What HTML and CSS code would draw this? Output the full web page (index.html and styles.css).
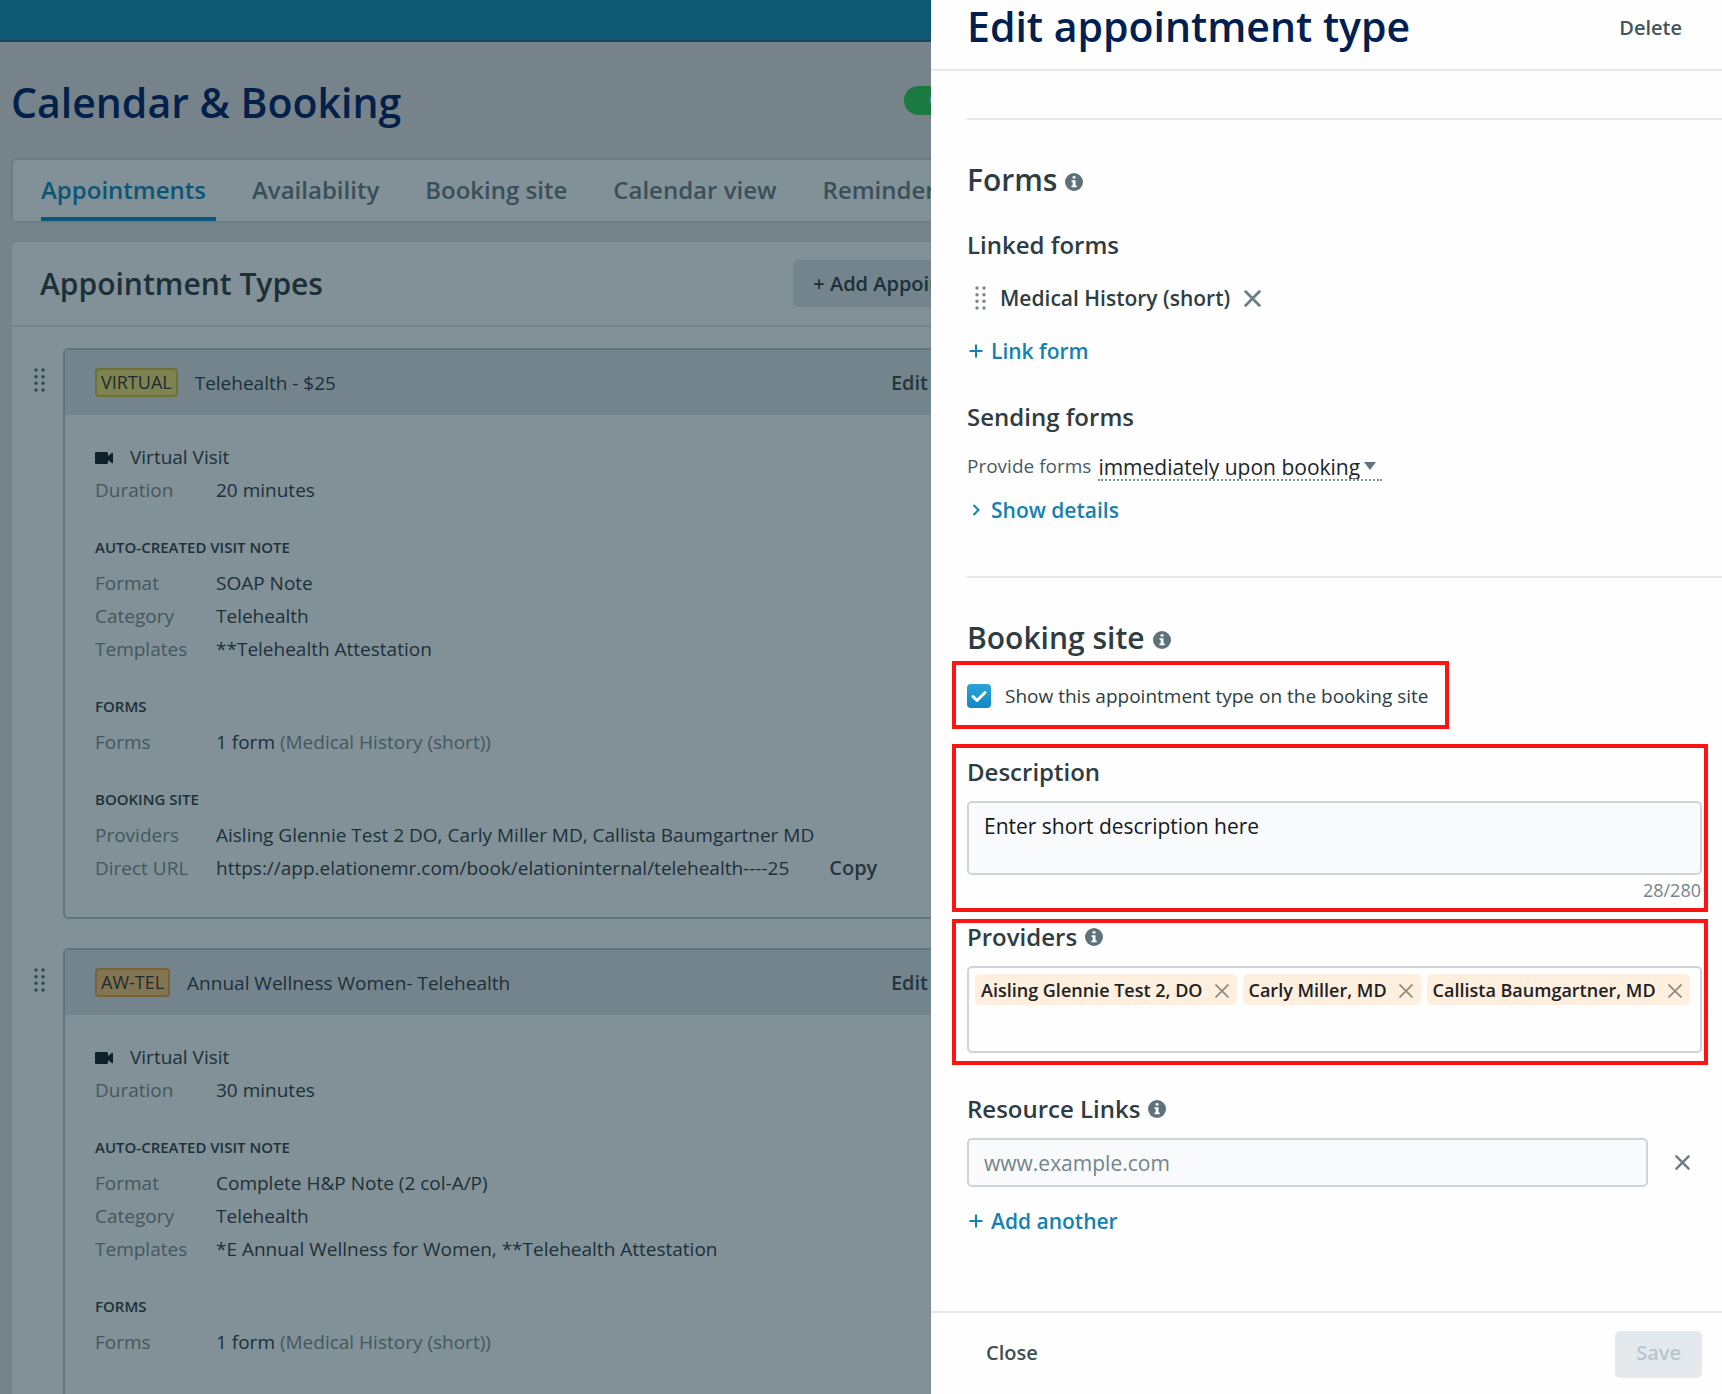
FILE: index.html
```html
<!DOCTYPE html>
<html lang="en">
<head>
<meta charset="utf-8">
<title>Calendar &amp; Booking</title>
<link rel="stylesheet" href="styles.css">
</head>
<body>
<svg class="sprite" aria-hidden="true">
  <symbol id="grip" viewBox="0 0 11 24">
    <g fill="currentColor">
      <circle cx="2" cy="2" r="1.7"/><circle cx="9" cy="2" r="1.7"/>
      <circle cx="2" cy="8.7" r="1.7"/><circle cx="9" cy="8.7" r="1.7"/>
      <circle cx="2" cy="15.3" r="1.7"/><circle cx="9" cy="15.3" r="1.7"/>
      <circle cx="2" cy="22" r="1.7"/><circle cx="9" cy="22" r="1.7"/>
    </g>
  </symbol>
  <symbol id="info" viewBox="0 0 18 18">
    <circle cx="9" cy="9" r="9" fill="currentColor"/>
    <path fill="#fff" d="M7.6 3.2h2.9v2.4H7.6zM6.6 7.2h3.9v5.3h1.2v1.7H6.5v-1.7h1.2V8.9H6.6z"/>
  </symbol>
  <symbol id="video" viewBox="0 0 18 12">
    <path fill="currentColor" d="M1.2 0h10.6A1.2 1.2 0 0 1 13 1.200V4l4-3.200q1-.5 1 .6v9.200q0 1.100-1 .6L13 8v2.800A1.200 1.200 0 0 1 11.800 12H1.200A1.200 1.200 0 0 1 0 10.800V1.200A1.200 1.200 0 0 1 1.200 0z"/>
  </symbol>
  <symbol id="cross" viewBox="0 0 16 16">
    <path d="M1.500 1.500l13 13M14.500 1.500l-13 13" fill="none" stroke="currentColor" stroke-width="2.600" stroke-linecap="round"/>
  </symbol>
  <symbol id="thin-cross" viewBox="0 0 14 14">
    <path d="M.5 .5l13 13M13.500 .5l-13 13" fill="none" stroke="currentColor" stroke-width="1.700"/>
  </symbol>
  <symbol id="plus" viewBox="0 0 14 14">
    <path d="M7 .5v13M.5 7h13" fill="none" stroke="currentColor" stroke-width="2"/>
  </symbol>
</svg>

<div class="app">
  <div class="page">
    <div class="topbar"></div>
    <main class="content">
      <div class="title-row">
        <h1 class="page-title">Calendar &amp; Booking</h1>
        <span class="status">On</span>
      </div>

      <nav class="tabs">
        <a class="tab tab-active" href="#appointments">Appointments</a>
        <a class="tab" href="#availability">Availability</a>
        <a class="tab" href="#booking">Booking site</a>
        <a class="tab" href="#calendar">Calendar view</a>
        <a class="tab" href="#reminders">Reminders</a>
      </nav>

      <section class="panel">
        <header class="panel-head">
          <h2 class="panel-title">Appointment Types</h2>
          <button class="add-button" type="button">+ Add Appointment</button>
        </header>

        <div class="types">
          <div class="type">
            <svg class="grip"><use href="#grip"/></svg>
            <article class="card">
              <header class="card-head">
                <span class="badge badge-yellow">VIRTUAL</span>
                <span class="card-title">Telehealth - $25</span>
                <button class="text-button edit" type="button">Edit</button>
              </header>
              <div class="card-body">
                <div class="visit"><svg class="video"><use href="#video"/></svg>Virtual Visit</div>
                <dl class="facts">
                  <dt>Duration</dt><dd>20 minutes</dd>
                </dl>
                <h3 class="group">AUTO-CREATED VISIT NOTE</h3>
                <dl class="facts">
                  <dt>Format</dt><dd>SOAP Note</dd>
                  <dt>Category</dt><dd>Telehealth</dd>
                  <dt>Templates</dt><dd>**Telehealth Attestation</dd>
                </dl>
                <h3 class="group">FORMS</h3>
                <dl class="facts">
                  <dt>Forms</dt><dd>1 form <span class="muted">(Medical History (short))</span></dd>
                </dl>
                <h3 class="group">BOOKING SITE</h3>
                <dl class="facts">
                  <dt>Providers</dt><dd>Aisling Glennie Test 2 DO, Carly Miller MD, Callista Baumgartner MD</dd>
                  <dt>Direct URL</dt><dd class="url">https://app.elationemr.com/book/elationinternal/telehealth----25 <button class="text-button" type="button">Copy</button></dd>
                </dl>
              </div>
            </article>
          </div>

          <div class="type">
            <svg class="grip"><use href="#grip"/></svg>
            <article class="card">
              <header class="card-head">
                <span class="badge badge-orange">AW-TEL</span>
                <span class="card-title">Annual Wellness Women- Telehealth</span>
                <button class="text-button edit" type="button">Edit</button>
              </header>
              <div class="card-body">
                <div class="visit"><svg class="video"><use href="#video"/></svg>Virtual Visit</div>
                <dl class="facts">
                  <dt>Duration</dt><dd>30 minutes</dd>
                </dl>
                <h3 class="group">AUTO-CREATED VISIT NOTE</h3>
                <dl class="facts">
                  <dt>Format</dt><dd>Complete H&amp;P Note (2 col-A/P)</dd>
                  <dt>Category</dt><dd>Telehealth</dd>
                  <dt>Templates</dt><dd>*E Annual Wellness for Women, **Telehealth Attestation</dd>
                </dl>
                <h3 class="group">FORMS</h3>
                <dl class="facts">
                  <dt>Forms</dt><dd>1 form <span class="muted">(Medical History (short))</span></dd>
                </dl>
              </div>
            </article>
          </div>
        </div>
      </section>
    </main>
  </div>

  <aside class="drawer">
    <header class="drawer-head">
      <h1 class="drawer-title">Edit appointment type</h1>
      <button class="delete" type="button">Delete</button>
    </header>

    <div class="drawer-body">
      <section class="section">
        <h2 class="section-title">Forms <svg class="info"><use href="#info"/></svg></h2>

        <h3 class="field-title linked-title">Linked forms</h3>
        <div class="linked">
          <svg class="linked-grip"><use href="#grip"/></svg>
          <span>Medical History (short)</span>
          <button class="icon-button" type="button" aria-label="Remove form"><svg class="cross-lg"><use href="#cross"/></svg></button>
        </div>
        <button class="link-button" type="button"><svg class="link-icon"><use href="#plus"/></svg>Link form</button>

        <h3 class="field-title sending-title">Sending forms</h3>
        <div class="sending">
          <label for="when">Provide forms</label>
          <span class="select-wrap">
            <select id="when"><option>immediately upon booking</option></select>
            <svg class="caret" viewBox="0 0 12 8"><path fill="#5f747d" d="M0 0h12L6 8z"/></svg>
          </span>
        </div>
        <button class="link-button details" type="button"><svg class="link-icon" viewBox="0 0 14 14"><path d="M4.500 2l5 5-5 5" fill="none" stroke="currentColor" stroke-width="2"/></svg>Show details</button>
      </section>

      <section class="section booking">
        <h2 class="section-title">Booking site <svg class="info"><use href="#info"/></svg></h2>

        <div class="marked marked-check">
          <input class="check" type="checkbox" id="show" checked>
          <label for="show">Show this appointment type on the booking site</label>
        </div>

        <div class="marked marked-description">
          <label class="field-title" for="description">Description</label>
          <textarea class="box description" id="description">Enter short description here</textarea>
          <div class="count">28/280</div>
        </div>

        <div class="marked marked-providers">
          <h3 class="field-title">Providers <svg class="info"><use href="#info"/></svg></h3>
          <div class="box chips">
            <span class="chip">Aisling Glennie Test 2, DO <button class="icon-button" type="button" aria-label="Remove Aisling Glennie"><svg class="chip-x"><use href="#thin-cross"/></svg></button></span>
            <span class="chip">Carly Miller, MD <button class="icon-button" type="button" aria-label="Remove Carly Miller"><svg class="chip-x"><use href="#thin-cross"/></svg></button></span>
            <span class="chip">Callista Baumgartner, MD <button class="icon-button" type="button" aria-label="Remove Callista Baumgartner"><svg class="chip-x"><use href="#thin-cross"/></svg></button></span>
          </div>
        </div>

        <label class="field-title resource-title" for="resource">Resource Links <svg class="info"><use href="#info"/></svg></label>
        <div class="resource">
          <input class="box resource-input" type="text" id="resource" placeholder="www.example.com">
          <button class="icon-button" type="button" aria-label="Remove link"><svg class="cross"><use href="#cross"/></svg></button>
        </div>
        <button class="link-button" type="button"><svg class="link-icon"><use href="#plus"/></svg>Add another</button>
      </section>
    </div>

    <footer class="drawer-foot">
      <button class="close" type="button">Close</button>
      <button class="save" type="button" disabled>Save</button>
    </footer>
  </aside>
</div>
</body>
</html>
```
FILE: styles.css
```css
* {
  box-sizing: border-box;
}

body {
  margin: 0;
  font-family: "Open Sans", "Noto Sans", sans-serif;
  font-size: 19px;
  background: #76838a;
}

h1, h2, h3, dl, dd {
  margin: 0;
}

h1, h2, h3 {
  font-weight: 600;
}

button, select, textarea, input {
  font: inherit;
  color: inherit;
}

button {
  padding: 0;
  border: 0;
  background: none;
  font-weight: 600;
  white-space: nowrap;
}

svg {
  display: block;
  flex: none;
}

.sprite {
  position: absolute;
  width: 0;
  height: 0;
}

.app {
  display: grid;
  grid-template-columns: 931fr 791fr;
  height: 100vh;
  overflow: hidden;
}

/* Page behind the drawer */

.page {
  min-width: 0;
  overflow: hidden;
  color: #1c303a;
}

.topbar {
  height: 42px;
  background: #0e5873;
  border-bottom: 2px solid #16475c;
}

/* The page runs on under the drawer */
.content {
  margin-right: -128px;
  padding: 32px 0 0 11px;
}

.title-row {
  display: flex;
  align-items: center;
  justify-content: space-between;
  padding-right: 99px;
}

.page-title {
  font-size: 41px;
  line-height: 56px;
  color: #02204a;
}

.status {
  width: 56px;
  margin-bottom: 4px;
  padding-left: 25px;
  border-radius: 15px;
  font-size: 19px;
  line-height: 29px;
  font-weight: 600;
  color: #8fa39f;
  background: #1b7942;
}

.tabs {
  display: flex;
  gap: 36px;
  height: 65px;
  margin-top: 28px;
  padding-left: 28px;
  border: 2px solid #6c7c84;
  border-radius: 6px;
  background: #829197;
}

.tab {
  padding-right: 10px;
  font-size: 24px;
  line-height: 60px;
  font-weight: 600;
  color: #3b4f59;
  text-decoration: none;
  white-space: nowrap;
}

.tab-active {
  color: #0b5676;
  box-shadow: inset 0 -4px #0b5676;
}

.panel {
  margin: 19px 0 0 1px;
  border-radius: 6px;
  background: #829197;
}

.panel-head {
  display: flex;
  align-items: center;
  justify-content: space-between;
  height: 85px;
  padding: 0 38px 0 28px;
  border-bottom: 2px solid #74848b;
}

.panel-title {
  font-size: 30px;
  line-height: 40px;
}

.add-button {
  height: 47px;
  padding: 0 20px;
  border-radius: 5px;
  font-size: 20px;
  background: #73848c;
}

.types {
  display: flex;
  flex-direction: column;
  gap: 29px;
  padding: 21px 28px 28px 22px;
}

.type {
  display: flex;
  gap: 18px;
}

.grip {
  width: 11px;
  height: 24px;
  margin-top: 20px;
  color: #34474f;
}

.card {
  flex: 1;
  border: 2px solid #60747d;
  border-radius: 6px;
}

.card-head {
  display: flex;
  align-items: center;
  height: 65px;
  padding: 0 101px 0 30px;
  background: #73848c;
}

.badge {
  margin-right: 17px;
  padding: 0 4px;
  border: 2px solid;
  border-radius: 4px;
  font-size: 18px;
  line-height: 25px;
  color: #1c2c2f;
}

.badge-yellow {
  background: #7f8352;
  border-color: #6c7236;
}

.badge-orange {
  background: #847552;
  border-color: #7a6238;
}

.text-button {
  font-size: 20px;
}

.edit {
  margin-left: auto;
  color: #24373f;
}

.card-body {
  padding: 26px 30px 32px;
}

.type:last-child .card-body {
  padding-bottom: 48px;
}

.visit {
  display: flex;
  align-items: center;
  gap: 17px;
  line-height: 33px;
}

.video {
  width: 18px;
  height: 12px;
  color: #0f222c;
}

.facts {
  display: grid;
  grid-template-columns: 121px 1fr;
  line-height: 33px;
}

.facts dt {
  color: #44575f;
}

.facts dd {
  white-space: nowrap;
}

.muted {
  color: #44575f;
}

.url .text-button {
  margin-left: 35px;
  line-height: 28px;
  color: #24373f;
}

.group {
  margin: 28px 0 8px;
  font-size: 15px;
  line-height: 24px;
}

/* Drawer */

.drawer {
  display: flex;
  flex-direction: column;
  min-width: 0;
  min-height: 0;
  color: #2e3d42;
  background: #fefefe;
}

.drawer-head {
  display: flex;
  align-items: center;
  justify-content: space-between;
  padding: 0 40px 17px 36px;
  border-bottom: 2px solid #e6eaeb;
}

.drawer-title {
  font-size: 41px;
  line-height: 52px;
  color: #02204f;
}

.delete {
  padding-top: 4px;
  font-size: 20px;
  line-height: 28px;
  color: #45555b;
}

.drawer-body {
  flex: 1;
  min-height: 0;
  overflow: hidden;
  padding: 47px 20px 0 36px;
}

.section {
  margin-right: -20px;
  padding: 40px 20px 52px 0;
  border-top: 2px solid #e6eaed;
}

.section-title {
  display: flex;
  align-items: center;
  gap: 8px;
  font-size: 30px;
  line-height: 40px;
}

.section-title .info {
  margin-top: 4px;
}

.info {
  width: 18px;
  height: 18px;
  color: #5f727b;
}

.field-title {
  display: flex;
  align-items: center;
  gap: 8px;
  font-size: 24px;
  line-height: 28px;
  font-weight: 600;
}

.linked-title {
  margin: 31px 0 25px;
}

.linked {
  display: flex;
  align-items: center;
  gap: 14px;
  margin-bottom: 25px;
  padding-left: 8px;
  font-size: 21px;
  line-height: 28px;
  font-weight: 600;
}

.linked-grip {
  width: 11px;
  height: 24px;
  color: #7b878c;
}

.icon-button {
  color: #6c7f88;
}

.cross-lg {
  width: 17px;
  height: 17px;
}

.cross {
  width: 15px;
  height: 15px;
}

.link-button {
  display: flex;
  align-items: center;
  gap: 8px;
  padding-left: 2px;
  font-size: 21px;
  line-height: 28px;
  color: #1482b0;
}

.link-icon {
  width: 14px;
  height: 14px;
}

.sending-title {
  margin: 38px 0 22px;
}

.sending {
  display: flex;
  align-items: flex-start;
  gap: 7px;
  height: 28px;
  margin-bottom: 15px;
  line-height: 26px;
  color: #4a5a60;
}

.select-wrap {
  display: flex;
  align-items: center;
  gap: 4px;
  padding-right: 6px;
  border-bottom: 2px dotted #7d8d95;
}

.select-wrap select {
  height: 26px;
  padding: 2px 0 0;
  border: 0;
  appearance: none;
  background: none;
  font-size: 21px;
  line-height: 24px;
  color: #1d2529;
}

.caret {
  width: 12px;
  height: 8px;
}

/* Call-out frames */
.marked {
  margin-left: -15px;
  border: 4px solid #ff1414;
}

.marked-check {
  display: flex;
  align-items: center;
  gap: 14px;
  width: fit-content;
  margin-top: 3px;
  padding: 17px 17px 15px 11px;
  line-height: 28px;
}

.check {
  width: 24px;
  height: 24px;
  margin: 0;
  appearance: none;
  border-radius: 4px;
  background: url("data:image/svg+xml,%3Csvg xmlns='http://www.w3.org/2000/svg' viewBox='0 0 24 24'%3E%3Cpath d='M6 12.500l4 4 8-8' fill='none' stroke='%23fff' stroke-width='3' stroke-linecap='round' stroke-linejoin='round'/%3E%3C/svg%3E"), linear-gradient(#2da3da, #1288c4);
}

.marked-description {
  margin: 15px -6px 0 -15px;
  padding: 10px 2px 6px 11px;
}

.box {
  display: block;
  width: 100%;
  border: 2px solid #ced4d9;
  border-radius: 5px;
  background: #f8fafc;
}

.description {
  height: 74px;
  margin: 15px 0 3px;
  padding: 9px 15px;
  resize: none;
  overflow: hidden;
  font-size: 21px;
  line-height: 28px;
  color: #14191c;
}

.count {
  padding-right: 1px;
  font-size: 18px;
  line-height: 24px;
  text-align: right;
  color: #74848c;
}

.marked-providers {
  margin: 7px -6px 0 -15px;
  padding: 0 2px 8px 11px;
}

.chips {
  display: flex;
  flex-wrap: wrap;
  align-content: flex-start;
  gap: 6px;
  min-height: 87px;
  margin-top: 15px;
  padding: 6px;
  background: #fefefe;
}

.chip {
  display: flex;
  align-items: center;
  gap: 12px;
  padding: 2px 8px 0 6px;
  border-radius: 5px;
  font-size: 18px;
  line-height: 29px;
  font-weight: 600;
  color: #1c2224;
  background: #feefdf;
}

.chip-x {
  width: 14px;
  height: 14px;
  color: #8f8880;
}

.resource-title {
  margin: 30px 0 15px;
}

.resource {
  display: flex;
  align-items: center;
  gap: 27px;
  margin-bottom: 20px;
  padding-right: 12px;
}

.resource-input {
  height: 49px;
  padding: 0 15px;
  font-size: 21px;
}

.resource-input::placeholder {
  color: #74848b;
}

.drawer-foot {
  display: flex;
  align-items: center;
  justify-content: space-between;
  padding: 18px 20px 16px 55px;
  border-top: 2px solid #e4e8ea;
}

.close,
.save {
  padding-bottom: 3px;
  font-size: 20px;
  line-height: 44px;
}

.close {
  color: #3f4f54;
}

.save {
  padding-left: 21px;
  padding-right: 21px;
  border-radius: 5px;
  color: #b9c6cc;
  background: #e4e9ed;
}
```
